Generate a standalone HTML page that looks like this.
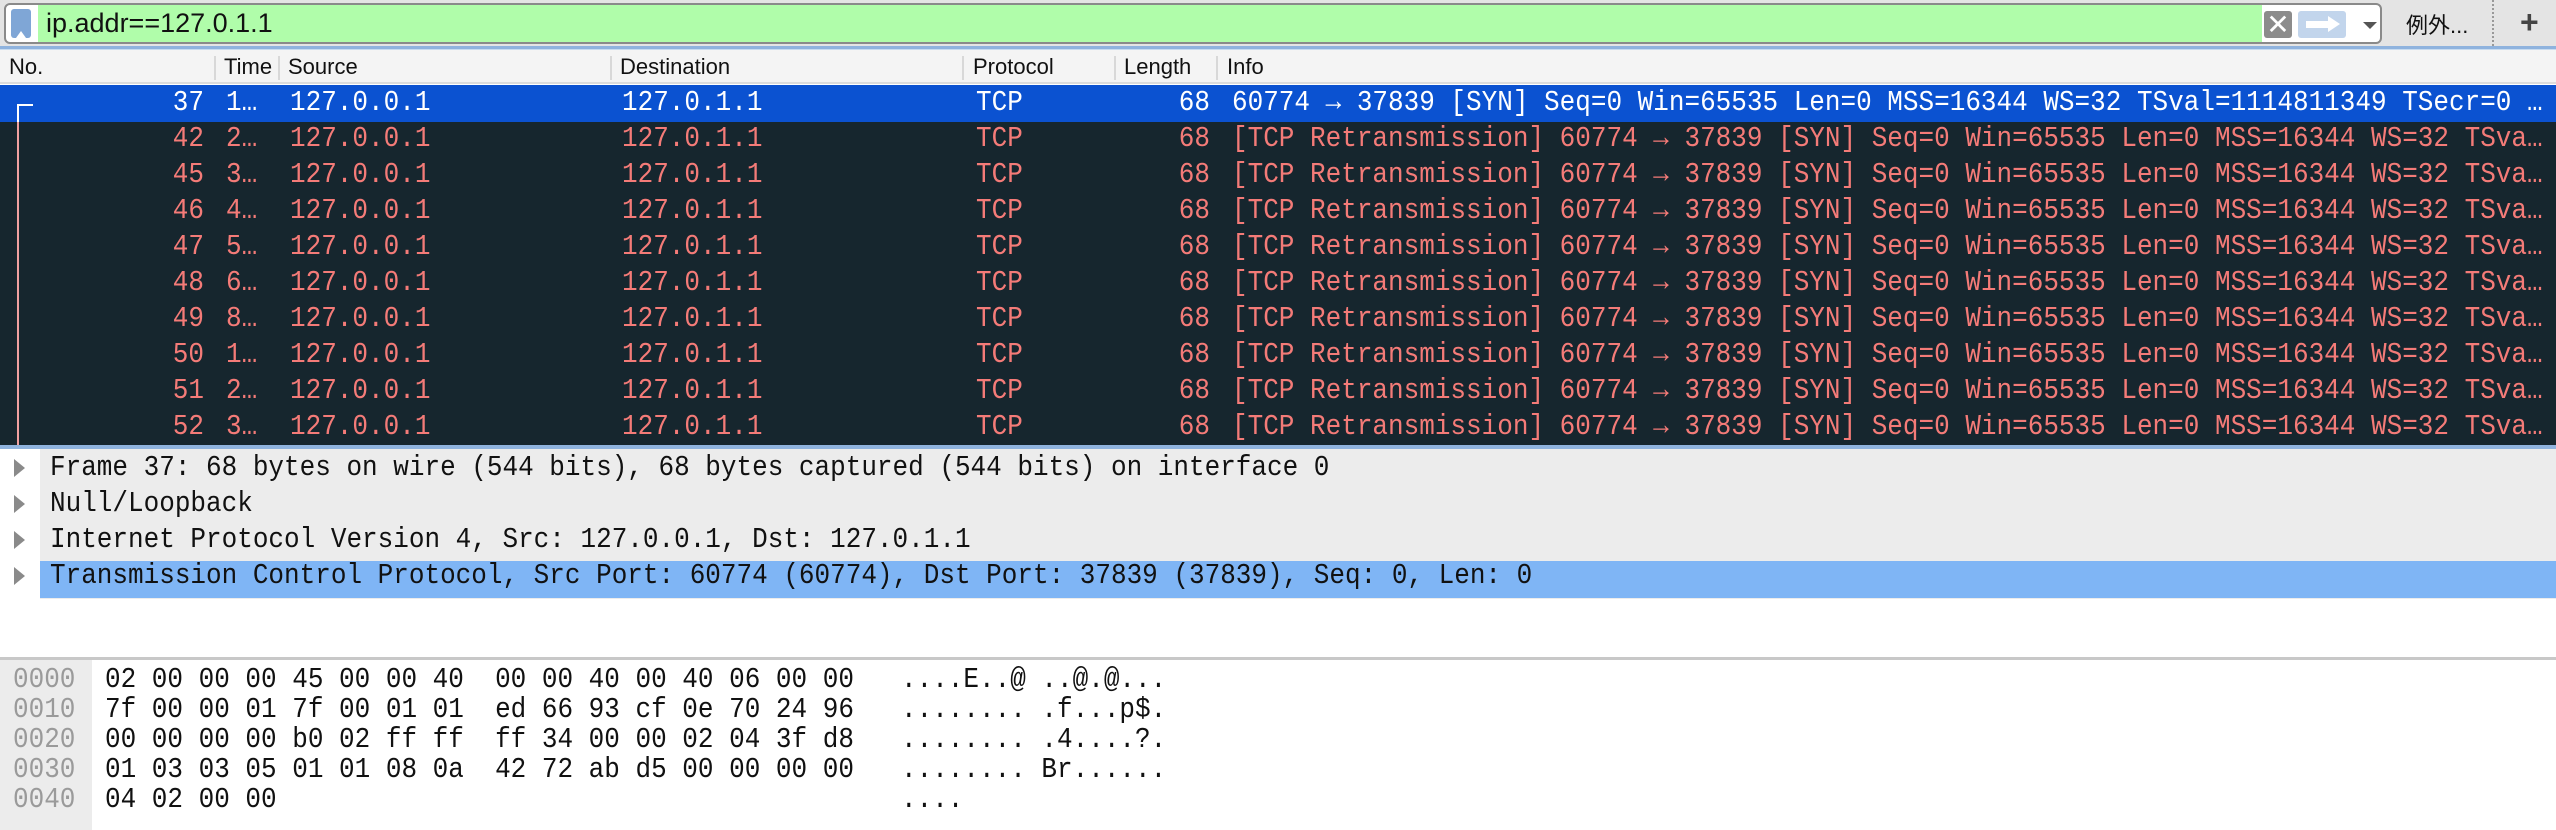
<!DOCTYPE html>
<html><head><meta charset="utf-8"><style>
*{margin:0;padding:0;box-sizing:border-box}
body{width:2556px;height:830px;overflow:hidden;background:#fff;position:relative;font-family:"Liberation Sans","Noto Sans CJK JP",sans-serif}
.abs{position:absolute;white-space:pre}
#top{left:0;top:0;width:2556px;height:48px;background:#e4e4e4}
#fbox{left:4px;top:3px;width:2378px;height:41px;border:2px solid #8a8a8a;border-radius:6px;background:#fff;overflow:hidden}
#green{left:32px;top:0;width:2224px;height:37px;background:#b0fdaa}
.hdr{top:50px;left:0;width:2556px;height:34px;background:#f4f4f4;border-bottom:2px solid #dcdcdc}
.htxt{top:54px;font-size:22px;color:#111}
.sep{top:56px;width:2px;height:24px;background:#d8d8d8}
.cell{font-family:"Liberation Mono","DejaVu Sans Mono",monospace;font-size:26px;transform:scaleY(1.12);transform-origin:0 40%}
</style></head><body>
<div class="abs" id="top"></div>
<div class="abs" id="fbox">
 <div class="abs" id="green"></div>
 <div class="abs" style="left:5px;top:4px;width:20px;height:29px;background:#7fa6d6;border-radius:3px"></div>
 <div class="abs" style="left:10px;top:26px;width:0;height:0;border-left:5px solid transparent;border-right:5px solid transparent;border-bottom:7px solid #fff"></div>
 <div class="abs" style="left:40px;top:3px;font-size:27px;color:#111">ip.addr==127.0.1.1</div>
 <div class="abs" style="left:2258px;top:6px;width:28px;height:27px;background:#8c8c8c;border-radius:3px;color:#fff;font-size:28px;line-height:27px;text-align:center">✕</div>
 <div class="abs" style="left:2292px;top:6px;width:48px;height:27px;background:#c2d5ec;border-radius:3px"></div>
 <div class="abs" style="left:2300px;top:16px;width:24px;height:7px;background:#fff"></div>
 <div class="abs" style="left:2322px;top:11px;width:0;height:0;border-top:8px solid transparent;border-bottom:8px solid transparent;border-left:12px solid #fff"></div>
 <div class="abs" style="left:2357px;top:17px;width:0;height:0;border-left:7px solid transparent;border-right:7px solid transparent;border-top:7px solid #555"></div>
</div>
<div class="abs" style="left:2406px;top:8px;font-size:22px;color:#111">例外...</div>
<div class="abs" style="left:2492px;top:0;height:46px;border-left:2px dotted #999"></div>
<div class="abs" style="left:2520px;top:4px;font-size:32px;font-weight:bold;color:#444">+</div>
<div class="abs" style="left:0;top:46px;width:2556px;height:4px;background:#8fb3de;border-bottom:1px solid #c9dcf0"></div>

<div class="abs hdr"></div>
<div class="abs htxt" style="left:9px">No.</div>
<div class="abs sep" style="left:214px"></div>
<div class="abs htxt" style="left:224px">Time</div>
<div class="abs sep" style="left:278px"></div>
<div class="abs htxt" style="left:288px">Source</div>
<div class="abs sep" style="left:610px"></div>
<div class="abs htxt" style="left:620px">Destination</div>
<div class="abs sep" style="left:962px"></div>
<div class="abs htxt" style="left:973px">Protocol</div>
<div class="abs sep" style="left:1114px"></div>
<div class="abs htxt" style="left:1124px">Length</div>
<div class="abs sep" style="left:1216px"></div>
<div class="abs htxt" style="left:1227px">Info</div>

<div class="abs" style="left:0;top:85px;width:2556px;height:360px;background:#16262e"></div>
<div class="abs" style="left:0;top:85px;width:2556px;height:37px;background:#0b52d1"></div>
<div class="abs" style="left:17px;top:104px;width:2px;height:341px;background:#f0a0a0"></div>
<div class="abs" style="left:17px;top:104px;width:16px;height:2px;background:#fff"></div>
<div class="abs" style="left:17px;top:104px;width:2px;height:18px;background:#fff"></div>

<div id="rows"></div>
<script>
var nums=["37","42","45","46","47","48","49","50","51","52"],ts=["1…","2…","3…","4…","5…","6…","8…","1…","2…","3…"];
var h="";
for(var i=0;i<10;i++){var y=87+i*36;var c=i==0?"#fff":"#f47b78";
var info=i==0?"60774 → 37839 [SYN] Seq=0 Win=65535 Len=0 MSS=16344 WS=32 TSval=1114811349 TSecr=0 …":"[TCP Retransmission] 60774 → 37839 [SYN] Seq=0 Win=65535 Len=0 MSS=16344 WS=32 TSva…";
h+='<div class="abs cell" style="top:'+y+'px;left:0;width:204px;text-align:right;color:'+c+'">'+nums[i]+'</div>';
h+='<div class="abs cell" style="top:'+y+'px;left:226px;color:'+c+'">'+ts[i]+'</div>';
h+='<div class="abs cell" style="top:'+y+'px;left:290px;color:'+c+'">127.0.0.1</div>';
h+='<div class="abs cell" style="top:'+y+'px;left:622px;color:'+c+'">127.0.1.1</div>';
h+='<div class="abs cell" style="top:'+y+'px;left:976px;color:'+c+'">TCP</div>';
h+='<div class="abs cell" style="top:'+y+'px;left:1150px;width:60px;text-align:right;color:'+c+'">68</div>';
h+='<div class="abs cell" style="top:'+y+'px;left:1232px;color:'+c+'">'+info+'</div>';}
document.getElementById("rows").innerHTML=h;
</script>
<div class="abs" style="left:0;top:445px;width:2556px;height:4px;background:#8fb3de"></div>

<div class="abs" style="left:40px;top:449px;width:2516px;height:150px;background:#ececec"></div>
<div class="abs" style="left:40px;top:561px;width:2516px;height:37px;background:#7fb5f5"></div>
<div id="det"></div>
<script>
var d=["Frame 37: 68 bytes on wire (544 bits), 68 bytes captured (544 bits) on interface 0","Null/Loopback","Internet Protocol Version 4, Src: 127.0.0.1, Dst: 127.0.1.1","Transmission Control Protocol, Src Port: 60774 (60774), Dst Port: 37839 (37839), Seq: 0, Len: 0"];
var h2="";
for(var i=0;i<4;i++){var y=452+i*36;
h2+='<div class="abs" style="left:14px;top:'+(y+7)+'px;width:0;height:0;border-top:9px solid transparent;border-bottom:9px solid transparent;border-left:11px solid #8a8a8a"></div>';
h2+='<div class="abs cell" style="left:50px;top:'+y+'px;color:#111">'+d[i]+'</div>';}
document.getElementById("det").innerHTML=h2;
</script>

<div class="abs" style="left:0;top:657px;width:2556px;height:3px;background:#c8c8c8"></div>
<div class="abs" style="left:0;top:660px;width:92px;height:170px;background:#ececec"></div>
<div id="hex"></div>
<script>
var hx=["02 00 00 00 45 00 00 40  00 00 40 00 40 06 00 00","7f 00 00 01 7f 00 01 01  ed 66 93 cf 0e 70 24 96","00 00 00 00 b0 02 ff ff  ff 34 00 00 02 04 3f d8","01 03 03 05 01 01 08 0a  42 72 ab d5 00 00 00 00","04 02 00 00"];
var as=["....E..@ ..@.@...","........ .f...p$.","........ .4....?.","........ Br......","...."];
var h3="";
for(var i=0;i<5;i++){var y=664+i*30;
h3+='<div class="abs cell" style="left:13px;top:'+y+'px;color:#9a9a9a">00'+i+'0</div>';
h3+='<div class="abs cell" style="left:105px;top:'+y+'px;color:#111">'+hx[i]+'</div>';
h3+='<div class="abs cell" style="left:901px;top:'+y+'px;color:#111">'+as[i]+'</div>';}
document.getElementById("hex").innerHTML=h3;
</script>
</body></html>
